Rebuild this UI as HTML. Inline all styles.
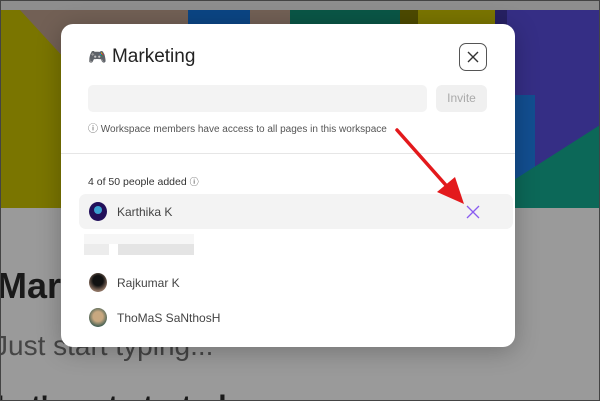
<!DOCTYPE html>
<html><head><meta charset="utf-8"><style>
*{margin:0;padding:0;box-sizing:border-box}
html,body{width:600px;height:401px;overflow:hidden}
body{position:relative;background:#9a9a9a;font-family:"Liberation Sans",sans-serif}
.clip{position:absolute;left:0;top:0;width:600px;height:401px;overflow:hidden}
.frame{position:absolute;left:0;top:0;width:600px;height:401px;border:1px solid #444;z-index:20;pointer-events:none}
.top{position:absolute;left:0;top:0;width:600px;height:10px;background:#8e8e8e}
.banner{position:absolute;left:0;top:10px;width:600px;height:198px;overflow:hidden}
.pg{position:absolute;color:#1a1a1a;white-space:nowrap;line-height:1}
.modal{position:absolute;left:61px;top:24px;width:454px;height:323px;background:#fff;border-radius:12px;box-shadow:0 4px 24px rgba(0,0,0,.25);z-index:5}
.t{position:absolute;color:#333;white-space:nowrap}
</style></head><body>
<div class="clip">
<div class="top"></div>
<div class="banner">
<svg width="600" height="198">
<rect x="0" y="0" width="600" height="198" fill="#726055"/>
<polygon points="0,8 0,198 190,198 190,185 20,0 0,0" fill="#7a7500"/>
<rect x="188" y="0" width="62" height="60" fill="#0b4584"/>
<rect x="290" y="0" width="110" height="198" fill="#0a5646"/>
<rect x="400" y="0" width="95" height="198" fill="#7a7500"/>
<rect x="400" y="0" width="18" height="198" fill="#4d4a00"/>
<rect x="495" y="0" width="105" height="198" fill="#352e85"/>
<rect x="495" y="0" width="12" height="198" fill="#262062"/>
<rect x="515" y="85" width="20" height="100" fill="#124e90"/>
<polygon points="470,198 600,115 600,198" fill="#0c6858"/>
</svg>
</div>
<div class="pg" style="left:-3px;top:268px;font-size:36px;font-weight:bold">Marketing</div>
<div class="pg" style="left:-6px;top:332px;font-size:28px;color:#454545">Just start typing...</div>
<div class="pg" style="left:-4px;top:392px;font-size:30px;font-weight:bold">Let's get started</div>

<div class="modal">
 <div class="t" style="left:27px;top:22px;font-size:19px;color:#222"><span style="color:#6b3fb0;font-size:15px">🎮</span> Marketing</div>
 <div style="position:absolute;left:398px;top:19px;width:28px;height:28px;border:1px solid #555;border-radius:7px">
  <svg width="26" height="26"><path d="M8 8L18 18M18 8L8 18" stroke="#333" stroke-width="1.4"/></svg></div>
 <div style="position:absolute;left:27px;top:61px;width:339px;height:27px;background:#f3f3f3;border-radius:5px"></div>
 <div style="position:absolute;left:375px;top:61px;width:51px;height:27px;background:#f0f0f0;border-radius:6px;color:#aaa;font-size:12px;text-align:center;line-height:27px">Invite</div>
 <div class="t" style="left:27px;top:96px;font-size:10px;color:#555">ⓘ Workspace members have access to all pages in this workspace</div>
 <div style="position:absolute;left:0;top:129px;width:454px;height:1px;background:#e6e6e6"></div>
 <div class="t" style="left:27px;top:151px;font-size:10.5px;color:#333">4 of 50 people added <span style="font-size:9px">ⓘ</span></div>
 <div style="position:absolute;left:18px;top:170px;width:434px;height:35px;background:#f3f3f3;border-radius:7px"></div>
 <div style="position:absolute;left:28px;top:178px;width:18px;height:19px;border-radius:50%;background:#22105a"><div style="position:absolute;left:5px;top:4px;width:8px;height:8px;border-radius:50%;background:#3aa0d0"></div></div>
 <div class="t" style="left:56px;top:181px;font-size:12px;color:#444">Karthika K</div>
 <svg style="position:absolute;left:405px;top:181px" width="14" height="14"><path d="M1 1L13 13M13 1L1 13" stroke="#8a5cf0" stroke-width="1.3"/></svg>
 <div style="position:absolute;left:23px;top:210px;width:110px;height:10px;background:#f6f6f6"></div>
 <div style="position:absolute;left:23px;top:220px;width:25px;height:11px;background:#ececec"></div>
 <div style="position:absolute;left:57px;top:220px;width:76px;height:11px;background:#e4e4e4"></div>
 <div style="position:absolute;left:28px;top:249px;width:18px;height:19px;border-radius:50%;background:radial-gradient(circle at 50% 40%,#111 35%,#8a7060 70%)"></div>
 <div class="t" style="left:56px;top:252px;font-size:12px;color:#444">Rajkumar K</div>
 <div style="position:absolute;left:28px;top:284px;width:18px;height:19px;border-radius:50%;background:radial-gradient(circle at 50% 45%,#c8a880 35%,#3a5a50 75%)"></div>
 <div class="t" style="left:56px;top:287px;font-size:12px;color:#444">ThoMaS SaNthosH</div>
</div>
<svg style="position:absolute;left:0;top:0;z-index:10" width="600" height="401">
 <path d="M397 130L452 192" stroke="#e3191c" stroke-width="3.5" stroke-linecap="round"/>
 <polygon points="464,204 437,192 455,177" fill="#e3191c"/>
</svg>
<div class="frame"></div>
</div>
</body></html>
